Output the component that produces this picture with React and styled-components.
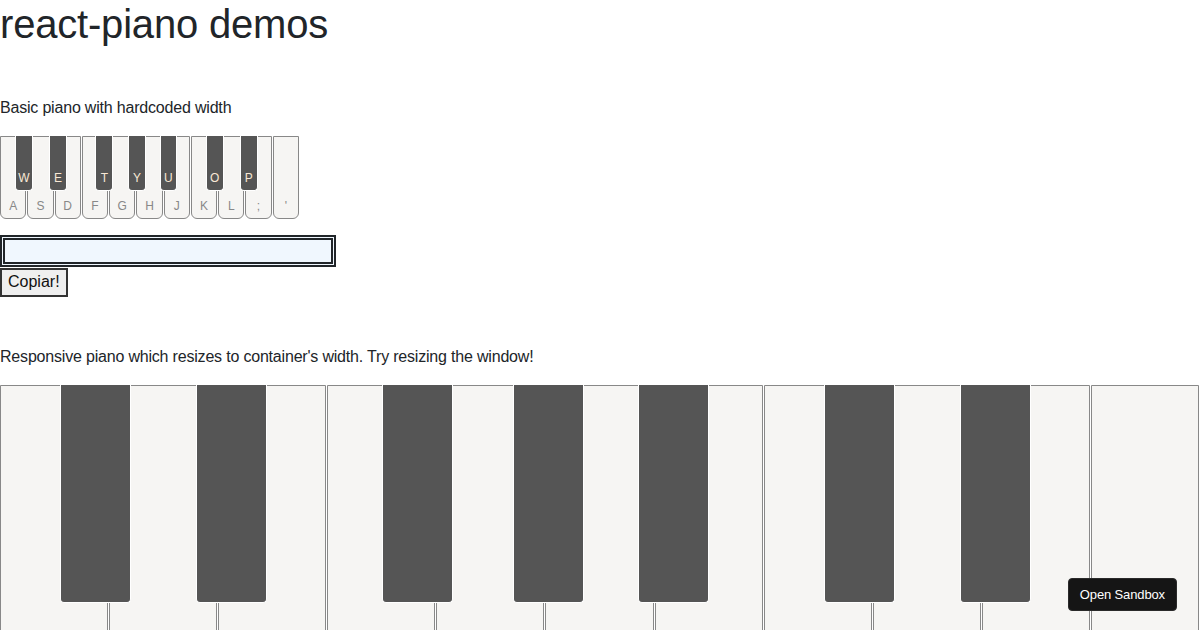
import React from "react";
import styled, { createGlobalStyle } from "styled-components";

const GlobalStyle = createGlobalStyle`
  html, body {
    overflow: hidden;
  }
  body {
    margin: 0;
    font-family: "Liberation Sans", Arial, sans-serif;
    font-size: 16px;
    line-height: 1.5;
    letter-spacing: -0.012em;
    color: #212529;
    background: #fff;
  }
`;

const NATURALS = ["c", "d", "e", "f", "g", "a", "b", "c", "d", "e", "f"];
const NATURAL_LABELS = ["a", "s", "d", "f", "g", "h", "j", "k", "l", ";", "'"];
const ACCIDENTAL_OFFSETS = { c: 0.55, d: 1.8, f: 3.5, g: 4.7, a: 5.85 };
const ACCIDENTAL_LABELS = ["w", "e", "t", "y", "u", "o", "p"];

// black keys: natural index they follow (last f has no sharp in range)
const accidentals = NATURALS.map((n, i) => ({ n, i }))
  .filter(({ n, i }) => ACCIDENTAL_OFFSETS[n] !== undefined && i < NATURALS.length - 1)
  .map(({ n, i }, k) => ({
    offset: ACCIDENTAL_OFFSETS[n] + (i >= 7 ? 7 : 0),
    label: ACCIDENTAL_LABELS[k],
  }));

const Piano = ({ width, labels }) => {
  const unit = 100 / NATURALS.length;
  return (
    <Keyboard $width={width}>
      {NATURALS.map((n, i) => (
        <WhiteKey key={i}>
          {labels && <NoteLabel>{NATURAL_LABELS[i]}</NoteLabel>}
        </WhiteKey>
      ))}
      {accidentals.map((a, i) => (
        <BlackKey
          key={i}
          style={{ left: `${a.offset * unit}%`, width: `${0.65 * unit}%` }}
        >
          {labels && <NoteLabel $accidental>{a.label}</NoteLabel>}
        </BlackKey>
      ))}
    </Keyboard>
  );
};

const App = () => {
  return (
    <Container>
      <GlobalStyle />
      <Title>react-piano demos</Title>
      <Section>
        <Text>Basic piano with hardcoded width</Text>
        <Piano width={300} labels />
        <CopyInput />
        <CopyButton>Copiar!</CopyButton>
      </Section>
      <Section>
        <Text>Responsive piano which resizes to container's width. Try resizing the window!</Text>
        <Piano />
      </Section>
      <SandboxButton>Open Sandbox</SandboxButton>
    </Container>
  );
};

const Container = styled.div`
  width: 100%;
`;

const Title = styled.h1`
  font-size: 40px;
  font-weight: 400;
  line-height: 1.2;
  margin: 0 0 8px;
`;

const Section = styled.div`
  margin-top: 48px;
`;

const Text = styled.p`
  margin: 0 0 16px;
`;

const Keyboard = styled.div`
  position: relative;
  display: flex;
  width: ${(p) => (p.$width ? `${p.$width}px` : "100%")};
  height: ${(p) => ((p.$width || 1200) / 11 / 0.33).toFixed(1)}px;
  letter-spacing: normal;
`;

const WhiteKey = styled.div`
  flex: 1;
  display: flex;
  margin-right: 1px;
  box-sizing: border-box;
  background: #f6f5f3;
  border: 1px solid #888;
  border-radius: 0 0 6px 6px;
`;

const BlackKey = styled.div`
  position: absolute;
  top: 0;
  height: 66%;
  display: flex;
  box-sizing: border-box;
  background: #555;
  border: 1px solid #fff;
  border-top: none;
  border-radius: 0 0 4px 4px;
  z-index: 2;
`;

const NoteLabel = styled.div`
  flex: 1;
  align-self: flex-end;
  margin-bottom: 3px;
  font-size: 12px;
  line-height: 18px;
  text-align: center;
  text-transform: capitalize;
  color: ${(p) => (p.$accidental ? "#f8e8d5" : "#888")};
`;

const CopyInput = styled.input`
  display: block;
  margin-top: 16px;
  width: 336px;
  height: 32px;
  box-sizing: border-box;
  border: 5px double #212529;
  background: #f0f7fe;
  padding: 0 4px;
`;

const CopyButton = styled.button`
  display: block;
  margin-top: 1px;
  height: 29px;
  padding: 0 6px;
  font-family: "Liberation Sans", Arial, sans-serif;
  font-size: 16px;
  color: #111;
  background: #efefef;
  border: 2px solid #333;
`;

const SandboxButton = styled.button`
  position: fixed;
  right: 23px;
  bottom: 19px;
  height: 33px;
  padding: 0 11px;
  font-family: "Liberation Sans", Arial, sans-serif;
  font-size: 13px;
  letter-spacing: -0.01em;
  color: #fff;
  background: #151515;
  border: 1px solid #2a2a2a;
  border-radius: 4px;
`;

export default App;
